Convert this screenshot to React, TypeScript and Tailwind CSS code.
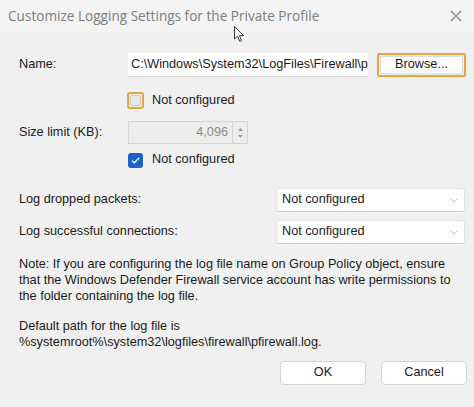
import React from "react";

const font = { fontFamily: '"Liberation Sans", Arial, sans-serif' };

function Chevron() {
  return (
    <svg width="8" height="5" viewBox="0 0 8 5" className="mr-[6px]">
      <path d="M0.5 0.5 L4 4 L7.5 0.5" fill="none" stroke="#b8b8b8" strokeWidth="1" />
    </svg>
  );
}

function Select() {
  return (
    <div className="w-[189px] h-[24px] bg-white border border-[#e3e3e3] border-b-[#cfcfcf] rounded-[3px] flex items-center justify-between pl-[5px] text-[#1a1a1a]">
      <span>Not configured</span>
      <Chevron />
    </div>
  );
}

export default function App() {
  return (
    <div className="relative w-[474px] h-[407px] bg-[#f0f0f0] overflow-hidden text-[#1a1a1a]" style={font}>
      {/* title bar */}
      <div className="h-[32px] flex items-center justify-between pl-[8px] pr-[12px] bg-[#f3f3f3]">
        <span className="text-[13.6px] text-[#7d7d7d]" style={{ fontFamily: '"Open Sans", sans-serif' }}>
          Customize Logging Settings for the Private Profile
        </span>
        <svg width="12" height="12" viewBox="0 0 12 12">
          <path d="M1 1 L11 11 M11 1 L1 11" stroke="#8a8a8a" strokeWidth="1.2" />
        </svg>
      </div>

      <div className="flex flex-col text-[12.7px]">
        {/* name row */}
        <div className="flex items-center mt-[21px] h-[24px]">
          <span className="w-[128px] pl-[19px]">Name:</span>
          <div className="w-[240px] h-[24px] bg-white border-b border-[#d6d6d6] flex items-center pl-[3px] overflow-hidden whitespace-nowrap">
            C:\Windows\System32\LogFiles\Firewall\p
          </div>
          <div className="ml-[9px] w-[89px] h-[24px] border-2 border-[#eba43c] rounded-[2px] p-[1px]">
            <div className="w-full h-full bg-white border border-[#dcdcdc] flex items-center justify-center">
              Browse...
            </div>
          </div>
        </div>

        {/* checkbox 1 */}
        <div className="flex items-center mt-[15px] h-[17px] pl-[127px]">
          <div className="w-[17px] h-[17px] border-2 border-[#eba43c] rounded-[3px] p-[1px]">
            <div className="w-full h-full bg-[#e9e9e9] border border-[#c9c9c9] rounded-[2px]" />
          </div>
          <span className="ml-[8px]">Not configured</span>
        </div>

        {/* size limit */}
        <div className="flex items-center mt-[12px] h-[23px]">
          <span className="w-[128px] pl-[19px]">Size limit (KB):</span>
          <div className="w-[120px] h-[23px] bg-[#ececec] border border-[#d4d4d4] flex items-center">
            <span className="flex-1 text-right pr-[4px] text-[#8a8a8a]">4,096</span>
            <div className="w-[15px] h-full border-l border-[#d4d4d4] flex flex-col items-center justify-center">
              <svg width="5" height="3" viewBox="0 0 5 3" className="mb-[4px]"><path d="M0 3 L2.5 0 L5 3Z" fill="#9a9a9a" /></svg>
              <svg width="5" height="3" viewBox="0 0 5 3"><path d="M0 0 L2.5 3 L5 0Z" fill="#9a9a9a" /></svg>
            </div>
          </div>
        </div>

        {/* checkbox 2 */}
        <div className="flex items-center mt-[8px] h-[16px] pl-[128px]">
          <div className="w-[15px] h-[15px] bg-[#1b63c6] rounded-[3px] flex items-center justify-center">
            <svg width="9" height="7" viewBox="0 0 9 7">
              <path d="M1 3.6 L3.3 5.8 L8 1" fill="none" stroke="white" strokeWidth="1.3" />
            </svg>
          </div>
          <span className="ml-[9px]">Not configured</span>
        </div>

        {/* selects */}
        <div className="flex items-center mt-[20px] h-[24px]">
          <span className="w-[276px] pl-[19px]">Log dropped packets:</span>
          <Select />
        </div>
        <div className="flex items-center mt-[8px] h-[24px]">
          <span className="w-[276px] pl-[19px]">Log successful connections:</span>
          <Select />
        </div>

        {/* note */}
        <p className="mt-[12px] pl-[19px] pr-[20px] leading-[16px]">
          Note: If you are configuring the log file name on Group Policy object, ensure that the Windows Defender Firewall service account has write permissions to the folder containing the log file.
        </p>
        <p className="mt-[14px] pl-[19px] pr-[20px] leading-[16px]">
          Default path for the log file is
          <br />
          %systemroot%\system32\logfiles\firewall\pfirewall.log.
        </p>

        {/* buttons */}
        <div className="flex justify-end gap-[15px] mt-[11px] pr-[7px]">
          <div className="w-[86px] h-[24px] bg-white border border-[#d3d3d3] rounded-[4px] flex items-center justify-center">OK</div>
          <div className="w-[86px] h-[24px] bg-white border border-[#d3d3d3] rounded-[4px] flex items-center justify-center">Cancel</div>
        </div>
      </div>

      {/* mouse cursor */}
      <svg className="absolute left-[234px] top-[26px]" width="11" height="17" viewBox="0 0 11 17">
        <path d="M0.5 0.5 L0.5 13 L3.5 10.2 L5.8 15.5 L7.6 14.7 L5.4 9.6 L9.5 9.6 Z" fill="white" stroke="#333" strokeWidth="1" strokeLinejoin="round" />
      </svg>
    </div>
  );
}
